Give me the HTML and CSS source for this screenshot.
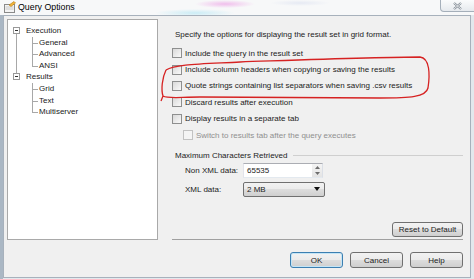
FILE: index.html
```html
<!DOCTYPE html>
<html lang="en">
<head>
    <meta charset="UTF-8">
    <title>Query Options</title>
    <link rel="stylesheet" href="styles.css">
</head>
<body>
    <div class="window">
        <div class="titlebar">
            <svg class="title-icon" width="13" height="13" viewBox="0 0 13 13">
                <rect x="1.5" y="3.5" width="10" height="8" fill="#f4f4f4" stroke="#8a8a8a"/>
                <rect x="2.5" y="5.5" width="8" height="1" fill="#c8c8c8"/>
                <rect x="2.5" y="7.5" width="8" height="1" fill="#c8c8c8"/>
                <path d="M6 4 L11 0.5 L12.5 2 L8 5.5 Z" fill="#f2b53a" stroke="#b67a14" stroke-width="0.6"/>
            </svg>
            <span class="title-text">Query Options</span>
            <div class="close-btn">
                <svg width="9" height="8" viewBox="0 0 9 8">
                    <path d="M1 1 L8 7 M8 1 L1 7" stroke="#7d8791" stroke-width="2.2"/>
                    <path d="M1 1 L8 7 M8 1 L1 7" stroke="#ffffff" stroke-width="0.8"/>
                </svg>
            </div>
        </div>

        <div class="client">
            <div class="main">
                <div class="tree">
                    <ul>
                        <li class="node">
                            <span class="expander"></span>Execution
                            <ul class="children">
                                <li>General</li>
                                <li>Advanced</li>
                                <li>ANSI</li>
                            </ul>
                        </li>
                        <li class="node">
                            <span class="expander"></span>Results
                            <ul class="children">
                                <li>Grid</li>
                                <li>Text</li>
                                <li>Multiserver</li>
                            </ul>
                        </li>
                    </ul>
                </div>

                <div class="options">
                    <div class="intro">Specify the options for displaying the result set in grid format.</div>
                    <div class="checks">
                        <div class="check"><span class="box"></span>Include the query in the result set</div>
                        <div class="check"><span class="box"></span>Include column headers when copying or saving the results</div>
                        <div class="check"><span class="box"></span>Quote strings containing list separators when saving .csv results</div>
                        <div class="check"><span class="box"></span>Discard results after execution</div>
                        <div class="check"><span class="box"></span>Display results in a separate tab</div>
                        <div class="check sub disabled"><span class="box"></span>Switch to results tab after the query executes</div>
                    </div>

                    <div class="group-title">Maximum Characters Retrieved</div>
                    <div class="field">
                        <label>Non XML data:</label>
                        <div class="spin">
                            <span>65535</span>
                            <div class="arrows">
                                <svg width="5" height="3" viewBox="0 0 5 3"><path d="M0 3 L2.5 0 L5 3 Z" fill="#6d6d6d"/></svg>
                                <svg width="5" height="3" viewBox="0 0 5 3"><path d="M0 0 L2.5 3 L5 0 Z" fill="#6d6d6d"/></svg>
                            </div>
                        </div>
                    </div>
                    <div class="field second">
                        <label>XML data:</label>
                        <div class="combo">
                            <span>2 MB</span>
                            <svg width="6" height="4" viewBox="0 0 6 4"><path d="M0 0 L6 0 L3 4 Z" fill="#111"/></svg>
                        </div>
                    </div>

                    <div class="reset-row">
                        <button class="btn reset">Reset to Default</button>
                    </div>
                </div>
            </div>

            <div class="footer">
                <button class="btn default">OK</button>
                <button class="btn">Cancel</button>
                <button class="btn">Help</button>
            </div>
        </div>

        <!-- red hand-drawn mark over the two options -->
        <svg class="scribble" width="474" height="279" viewBox="0 0 474 279">
            <path d="M166 70 C175 64, 200 64, 240 62 C300 60, 380 57, 420 57 C430 58, 430 75, 428 88 C426 97, 410 98, 380 98 L200 97 C180 97, 168 99, 163 96 C161 90, 162 78, 166 70 M163 96 L161 101"
                  fill="none" stroke="#d62222" stroke-width="1.3"/>
        </svg>
    </div>
</body>
</html>
```

FILE: styles.css
```css
* {
    box-sizing: border-box;
}
body {
    margin: 0;
    font-family: "Liberation Sans", Arial, sans-serif;
    font-size: 8px;
    color: #222;
    background-color: #dfe5ec;
}
.window {
    position: relative;
    width: 474px;
    height: 279px;
    overflow: hidden;
    background: linear-gradient(to right, #aab7c4 3px, #e3e8ed 3px);
}
.titlebar {
    height: 15px;
    display: flex;
    align-items: flex-start;
    background-color: #f7f8f9;
    background-image:
        radial-gradient(ellipse 30px 4px at 225px 4px, rgba(232, 120, 220, 0.45), transparent),
        radial-gradient(ellipse 40px 4px at 195px 13px, rgba(120, 215, 240, 0.35), transparent),
        radial-gradient(ellipse 30px 3px at 300px 3px, rgba(190, 200, 230, 0.3), transparent);
}
.title-icon {
    margin: 1px 0 0 3px;
}
.title-text {
    margin: 2px 0 0 2px;
    font-size: 8.8px;
    color: #000;
}
.close-btn {
    margin-left: auto;
    margin-right: -6px;
    width: 40px;
    height: 12px;
    border: 1px solid #a5afba;
    border-top: none;
    border-radius: 0 0 4px 4px;
    background: linear-gradient(#fafbfc, #e6eaee);
    display: flex;
    justify-content: center;
    align-items: center;
    padding-right: 6px;
}
.client {
    margin-left: 3px;
    width: 468px;
    height: 263px;
    border: 1px solid #a7b1bc;
    background-color: #f0f0f0;
    display: flex;
    flex-direction: column;
}
.main {
    display: flex;
    padding: 3px 0 0 3px;
}
.tree {
    width: 151px;
    height: 221px;
    border: 1px solid #a9a9a9;
    background-color: #fff;
}
.tree ul {
    list-style: none;
    margin: 0;
    padding: 0;
}
.tree > ul {
    padding-top: 5px;
}
.tree li {
    position: relative;
    line-height: 11.6px;
    white-space: nowrap;
}
.tree .node {
    padding-left: 18px;
}
.tree .node:first-child::after {
    content: '';
    position: absolute;
    left: 8px;
    top: 9px;
    bottom: -3px;
    border-left: 1px solid #a8a8a8;
}
.expander {
    position: absolute;
    left: 5px;
    top: 2px;
    width: 7px;
    height: 7px;
    border: 1px solid #999;
    background-color: #fff;
    z-index: 1;
}
.expander::after {
    content: '';
    position: absolute;
    left: 1px;
    top: 2px;
    width: 3px;
    height: 1px;
    background-color: #333;
}
.tree .children {
    padding-left: 13px;
}
.tree .children li::before {
    content: '';
    position: absolute;
    left: -7px;
    top: -6px;
    width: 5px;
    height: 12px;
    border-left: 1px solid #a8a8a8;
    border-bottom: 1px solid #a8a8a8;
}
.tree .children li:first-child::before {
    top: 0;
    height: 6px;
}
.options {
    width: 291px;
    height: 221px;
    margin-left: 14px;
    display: flex;
    flex-direction: column;
    border-bottom: 1px solid #a0a0a0;
}
.intro {
    margin-top: 10px;
    padding-left: 3px;
    line-height: 11px;
}
.checks {
    margin-top: 5px;
}
.check {
    display: flex;
    align-items: center;
    height: 16.4px;
    white-space: nowrap;
}
.box {
    width: 10px;
    height: 10px;
    margin-right: 3px;
    border: 1px solid #8e8f8f;
    background: linear-gradient(135deg, #d9d9d9, #f9f9f9);
    flex-shrink: 0;
}
.check.sub {
    padding-left: 11px;
}
.check.disabled {
    color: #8f8f8f;
}
.check.disabled .box {
    border-color: #c2c2c2;
    background: #f4f4f4;
}
.group-title {
    display: flex;
    align-items: center;
    margin-top: 7.5px;
    padding-left: 3px;
    line-height: 10px;
    white-space: nowrap;
}
.group-title::after {
    content: '';
    flex: 1;
    margin-left: 6px;
    border-top: 1px solid #cfcfcf;
}
.field {
    display: flex;
    align-items: center;
    margin-top: 2px;
    padding-left: 13px;
    height: 15px;
}
.field.second {
    margin-top: 4px;
}
.field label {
    width: 58px;
}
.spin {
    width: 80px;
    height: 15px;
    border: 1px solid #abadb3;
    border-color: #abadb3 #dbdfe6 #e3e9ef #e2e3ea;
    background-color: #fff;
    display: flex;
    align-items: center;
    justify-content: space-between;
    padding-left: 3px;
}
.arrows {
    width: 10px;
    height: 13px;
    display: flex;
    flex-direction: column;
    justify-content: space-around;
    align-items: center;
    background: linear-gradient(#f4f4f4, #e4e4e4);
}
.arrows svg {
    display: block;
}
.combo {
    width: 82px;
    height: 15px;
    border: 1px solid #707070;
    border-radius: 2px;
    background: linear-gradient(#f2f2f2, #ebebeb 50%, #dddddd 50%, #cfcfcf);
    display: flex;
    align-items: center;
    justify-content: space-between;
    padding: 0 4px 0 3px;
}
.reset-row {
    margin-top: auto;
    margin-bottom: 2px;
    display: flex;
    justify-content: flex-end;
}
.btn {
    height: 16px;
    width: 53px;
    padding: 0;
    font-family: "Liberation Sans", Arial, sans-serif;
    font-size: 8px;
    color: #222;
    border: 1px solid #707070;
    border-radius: 3px;
    background: linear-gradient(#f2f2f2, #ebebeb 50%, #dddddd 50%, #cfcfcf);
}
.btn.reset {
    width: 71px;
    height: 15px;
}
.btn.default {
    border-color: #3c7fb1;
    box-shadow: inset 0 0 0 1px #c4e5f6;
}
.footer {
    display: flex;
    justify-content: flex-end;
    gap: 7px;
    padding: 12px 7px 0 0;
}
.scribble {
    position: absolute;
    left: 0;
    top: 0;
    pointer-events: none;
}
```
